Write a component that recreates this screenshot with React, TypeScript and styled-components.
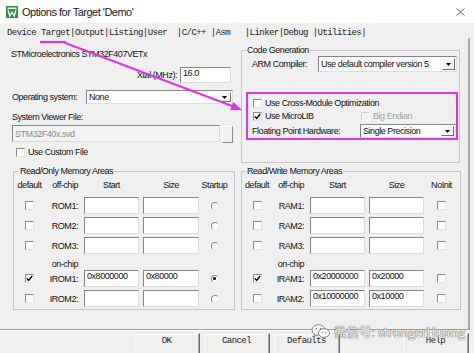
import React from "react";
import styled, { createGlobalStyle } from "styled-components";

const GlobalStyle = createGlobalStyle`
  html, body { margin: 0; padding: 0; background: #f0f0f0; }
  body {
    width: 474px; height: 353px; overflow: hidden;
    font-family: "Liberation Sans", Arial, sans-serif;
    font-size: 9px; letter-spacing: -0.45px; color: #111;
  }
  * { box-sizing: border-box; }
`;

const Window = styled.div`
  position: relative;
  width: 474px;
  height: 353px;
  overflow: hidden;
  background: #f0f0f0;
  display: flex;
  flex-direction: column;
`;

const TitleBar = styled.div`
  flex: none;
  height: 23px;
  background: #fff;
  display: flex;
  align-items: center;
  padding-left: 6px;
`;

const Title = styled.span`
  margin-left: 4px;
  font-size: 11px;
  letter-spacing: -0.5px;
  line-height: 14px;
  color: #1a1a1a;
`;

const CloseButton = styled.span`
  margin-left: auto;
  margin-right: 9px;
  display: flex;
`;

const TabBar = styled.div`
  flex: none;
  height: 15px;
  display: flex;
  padding: 4px 0 0 7px;
  font-family: "Liberation Mono", "Courier New", monospace;
  font-size: 9px;
  letter-spacing: -0.55px;
  line-height: 12px;
  white-space: pre;
  color: #222;
`;

const Tab = styled.span``;

const TabPage = styled.div`
  flex: none;
  width: 470px;
  height: 292px;
  border-right: 2px solid #a8a8a8;
  border-bottom: 1px solid #a0a0a0;
  box-shadow: 0 1px 0 #fff;
  display: flex;
  flex-direction: column;
`;

const TopSection = styled.div`
  display: flex;
  align-items: flex-start;
  padding-left: 11px;
  gap: 8px;
`;

const LeftColumn = styled.div`
  width: 222px;
  display: flex;
  flex-direction: column;
`;

const Row = styled.div<{ $mt: number; $h: number; $pl?: number }>`
  display: flex;
  align-items: center;
  margin-top: ${(p) => p.$mt}px;
  height: ${(p) => p.$h}px;
  padding-left: ${(p) => p.$pl ?? 0}px;
  line-height: 12px;
  white-space: nowrap;
`;

const Label = styled.span<{ $ml?: number; $mr?: number; $dim?: boolean }>`
  margin-left: ${(p) => p.$ml ?? 0}px;
  margin-right: ${(p) => p.$mr ?? 0}px;
  color: ${(p) => (p.$dim ? "#a3a3a3" : "#111")};
  white-space: nowrap;
`;

const EditBox = styled.div<{ $w: number; $h: number; $disabled?: boolean; $center?: boolean; $ml?: number }>`
  flex: none;
  width: ${(p) => p.$w}px;
  height: ${(p) => p.$h}px;
  margin-left: ${(p) => p.$ml ?? 0}px;
  background: ${(p) => (p.$disabled ? "#f3f3f3" : "#fff")};
  color: ${(p) => (p.$disabled ? "#8a8a8a" : "#111")};
  border: 1px solid;
  border-color: #858585 #dedede #dedede #858585;
  display: flex;
  align-items: ${(p) => (p.$center ? "center" : "flex-start")};
  padding: 0 2px;
  line-height: 10px;
  white-space: nowrap;
  overflow: hidden;
`;

const BrowseButton = styled.span`
  flex: none;
  width: 11px;
  height: 17px;
  margin-left: 2px;
  margin-top: 2px;
  background: #f0f0f0;
  border: 1px solid;
  border-color: #fff #8a8a8a #8a8a8a #fff;
`;

const Combo = styled.div<{ $w: number; $h: number; $ml?: string; $mr?: number }>`
  flex: none;
  width: ${(p) => p.$w}px;
  height: ${(p) => p.$h}px;
  margin-left: ${(p) => p.$ml ?? "0"};
  margin-right: ${(p) => p.$mr ?? 0}px;
  background: #fff;
  border: 1px solid;
  border-color: #858585 #dedede #dedede #858585;
  display: flex;
  align-items: center;
  padding-left: 2px;
  white-space: nowrap;
`;

const DropButton = styled.span`
  margin-left: auto;
  align-self: stretch;
  width: 13px;
  margin-top: 1px;
  margin-bottom: 1px;
  margin-right: 1px;
  background: #f4f4f4;
  border: 1px solid;
  border-color: #fff #6e6e6e #6e6e6e #fff;
  display: flex;
  align-items: center;
  justify-content: center;
`;

const Group = styled.fieldset<{ $w: number; $mt: number; $pb: number; $pl: number; $pr: number }>`
  margin: ${(p) => p.$mt}px 0 0 0;
  padding: 0 ${(p) => p.$pr}px ${(p) => p.$pb}px ${(p) => p.$pl}px;
  width: ${(p) => p.$w}px;
  min-width: 0;
  border: 1px solid #c6c6c6;
  flex: none;
`;

const Legend = styled.legend<{ $ml: number }>`
  margin-left: ${(p) => p.$ml}px;
  padding: 0 1px;
  line-height: 12px;
  font-size: 9px;
  color: #111;
`;

const Highlight = styled.div`
  margin-top: 20px;
  width: 212px;
  height: 48px;
  border: 2px solid #e233e2;
  padding: 3px 0 0 4px;
  display: flex;
  flex-direction: column;
`;

const HLRow = styled.div<{ $mt: number; $h: number }>`
  display: flex;
  align-items: center;
  margin-top: ${(p) => p.$mt}px;
  height: ${(p) => p.$h}px;
  white-space: nowrap;
`;

const HLCell = styled.div<{ $w?: number }>`
  display: flex;
  align-items: center;
  width: ${(p) => (p.$w ? `${p.$w}px` : "auto")};
  flex: none;
`;

const CheckSquare = styled.span<{ $disabled?: boolean; $ml?: number }>`
  flex: none;
  display: inline-flex;
  align-items: center;
  justify-content: center;
  width: 9px;
  height: 9px;
  margin-left: ${(p) => p.$ml ?? 0}px;
  background: ${(p) => (p.$disabled ? "#f5f5f5" : "#fff")};
  border: 1px solid;
  border-color: ${(p) =>
    p.$disabled ? "#d2d2d2 #f6f6f6 #f6f6f6 #d2d2d2" : "#8a8a8a #e4e4e4 #e4e4e4 #8a8a8a"};
`;

const RadioCircle = styled.span`
  flex: none;
  display: inline-flex;
  align-items: center;
  justify-content: center;
  width: 8px;
  height: 8px;
  border-radius: 50%;
  border: 1px solid;
  border-color: #8a8a8a #eeeeee #eeeeee #8a8a8a;
  background: #fff;
`;

const RadioDot = styled.span`
  width: 3px;
  height: 3px;
  border-radius: 50%;
  background: #000;
`;

const MemorySection = styled.div`
  display: flex;
  margin-top: 2px;
  padding-left: 13px;
  gap: 6px;
`;

const MemGrid = styled.div`
  display: flex;
  flex-direction: column;
  padding-left: 1px;
`;

const MemRow = styled.div<{ $cols: string; $h: number; $mt: number }>`
  display: grid;
  grid-template-columns: ${(p) => p.$cols};
  align-items: center;
  height: ${(p) => p.$h}px;
  margin-top: ${(p) => p.$mt}px;
  line-height: 12px;
  white-space: nowrap;
`;

const CenterCell = styled.div<{ $w?: number }>`
  display: flex;
  justify-content: center;
  align-items: center;
  width: ${(p) => (p.$w ? `${p.$w}px` : "auto")};
`;

const RightCell = styled.div`
  text-align: right;
  padding-right: 6px;
`;

const ButtonRow = styled.div`
  flex: none;
  display: flex;
  margin-top: 3px;
  padding: 0 5px 0 133px;
  gap: 3px;
`;

const PushButton = styled.div<{ $push?: boolean }>`
  width: 67px;
  height: 22px;
  margin-left: ${(p) => (p.$push ? "auto" : "0")};
  background: #f0f0f0;
  border: 1px solid;
  border-color: #ececec #6a6a6a #6a6a6a #ececec;
  box-shadow: inset -1px -1px 0 #a8a8a8, inset 1px 1px 0 #fff;
  display: flex;
  justify-content: center;
  padding-top: 1px;
  font-family: "Liberation Mono", "Courier New", monospace;
  font-size: 9px;
  letter-spacing: -0.55px;
  line-height: 12px;
  color: #222;
`;

const Overlay = styled.svg`
  position: absolute;
  left: 0;
  top: 0;
  pointer-events: none;
`;

const Watermark = styled.div`
  position: absolute;
  left: 311px;
  top: 323px;
  display: flex;
  align-items: center;
  gap: 3px;
  font-family: "Noto Sans CJK SC", "Noto Sans", sans-serif;
  font-size: 12.5px;
  letter-spacing: 0;
  line-height: 17px;
  color: rgba(255, 255, 255, 0.92);
  text-shadow: 0 0 1px #6d6d6d, 0 0 1px #6d6d6d, 0 0 1px #8d8d8d;
  white-space: nowrap;
`;

const Check = ({ checked, disabled, ml }: { checked?: boolean; disabled?: boolean; ml?: number }) => (
  <CheckSquare $disabled={disabled} $ml={ml}>
    {checked && (
      <svg width="7" height="7" viewBox="0 0 7 7">
        <polyline points="0.8,3.4 2.6,5.4 6.2,1" fill="none" stroke="#000" strokeWidth="1.4" />
      </svg>
    )}
  </CheckSquare>
);

const Radio = ({ on }: { on?: boolean }) => <RadioCircle>{on && <RadioDot />}</RadioCircle>;

const Arrow = () => (
  <svg width="5" height="3" viewBox="0 0 5 3">
    <polygon points="0,0 5,0 2.5,3" fill="#000" />
  </svg>
);

const AppIcon = () => (
  <svg width="12" height="12" viewBox="0 0 12 12">
    <rect x="0" y="0" width="12" height="12" fill="#2f8c45" />
    <rect x="1.5" y="1.5" width="9" height="1.6" fill="#e8f5e0" />
    <path d="M2 4 L3.8 10 L6 6 L8.2 10 L10 4" fill="none" stroke="#fff" strokeWidth="1.3" />
  </svg>
);

const CloseIcon = () => (
  <svg width="9" height="8" viewBox="0 0 9 8">
    <path d="M0.5 0.5 L8.5 7.5 M8.5 0.5 L0.5 7.5" stroke="#555" strokeWidth="0.9" />
  </svg>
);

const WeChatIcon = () => (
  <svg width="20" height="17" viewBox="0 0 20 17">
    <ellipse cx="7.5" cy="7" rx="6.5" ry="5.3" fill="rgba(255,255,255,0.85)" stroke="#7a7a7a" strokeWidth="0.9" />
    <path d="M3.5 11 L2.6 13.6 L6 12" fill="rgba(255,255,255,0.85)" stroke="#7a7a7a" strokeWidth="0.9" />
    <ellipse cx="13" cy="10" rx="5.5" ry="4.4" fill="rgba(255,255,255,0.9)" stroke="#7a7a7a" strokeWidth="0.9" />
    <circle cx="5.3" cy="5.6" r="0.8" fill="#7a7a7a" />
    <circle cx="9.5" cy="5.6" r="0.8" fill="#7a7a7a" />
    <circle cx="11.4" cy="9.4" r="0.65" fill="#7a7a7a" />
    <circle cx="14.8" cy="9.4" r="0.65" fill="#7a7a7a" />
  </svg>
);

const tabs = ["Device ", "Target", "|Output", "|Listing", "|User  ", "|C/C++ ", "|Asm   ", "|Linker", "|Debug ", "|Utilities|"];

type MemItem = { name: string; def?: boolean; start?: string; size?: string; flag?: boolean };

const romOff: MemItem[] = [{ name: "ROM1:" }, { name: "ROM2:" }, { name: "ROM3:" }];
const romOn: MemItem[] = [
  { name: "IROM1:", def: true, start: "0x8000000", size: "0x80000", flag: true },
  { name: "IROM2:" },
];
const ramOff: MemItem[] = [{ name: "RAM1:" }, { name: "RAM2:" }, { name: "RAM3:" }];
const ramOn: MemItem[] = [
  { name: "IRAM1:", def: true, start: "0x20000000", size: "0x20000" },
  { name: "IRAM2:", start: "0x10000000", size: "0x10000" },
];

type MemAreaProps = {
  legend: string;
  legendMl: number;
  width: number;
  cols: string;
  startW: number;
  sizeW: number;
  lastHeader: string;
  offChip: MemItem[];
  onChip: MemItem[];
  radio: boolean;
};

const MemArea = ({ legend, legendMl, width, cols, startW, sizeW, lastHeader, offChip, onChip, radio }: MemAreaProps) => {
  const renderRow = (m: MemItem, mt: number) => (
    <MemRow key={m.name} $cols={cols} $h={17} $mt={mt}>
      <CenterCell>
        <Check checked={m.def} />
      </CenterCell>
      <RightCell>{m.name}</RightCell>
      <EditBox $w={startW} $h={17}>{m.start}</EditBox>
      <EditBox $w={sizeW} $h={17}>{m.size}</EditBox>
      <CenterCell>{radio ? <Radio on={m.flag} /> : <Check checked={m.flag} />}</CenterCell>
    </MemRow>
  );
  return (
    <Group $w={width} $mt={0} $pb={2} $pl={0} $pr={0}>
      <Legend $ml={legendMl}>{legend}</Legend>
      <MemGrid>
        <MemRow $cols={cols} $h={14} $mt={1}>
          <CenterCell>default</CenterCell>
          <RightCell>off-chip</RightCell>
          <CenterCell $w={startW}>Start</CenterCell>
          <CenterCell $w={sizeW}>Size</CenterCell>
          <CenterCell>{lastHeader}</CenterCell>
        </MemRow>
        {offChip.map((m, i) => renderRow(m, i === 0 ? 5 : 3))}
        <MemRow $cols={cols} $h={13} $mt={3}>
          <span />
          <RightCell>on-chip</RightCell>
        </MemRow>
        {onChip.map((m, i) => renderRow(m, i === 0 ? 0 : 3))}
      </MemGrid>
    </Group>
  );
};

export default function App() {
  return (
    <Window>
      <GlobalStyle />
      <TitleBar>
        <AppIcon />
        <Title>Options for Target 'Demo'</Title>
        <CloseButton>
          <CloseIcon />
        </CloseButton>
      </TitleBar>

      <TabBar>
        {tabs.map((t) => (
          <Tab key={t}>{t}</Tab>
        ))}
      </TabBar>

      <TabPage>
        <TopSection>
          <LeftColumn>
            <Row $mt={10} $h={12}>STMicroelectronics STM32F407VETx</Row>
            <Row $mt={7} $h={16}>
              <Label $ml={126} $mr={3}>Xtal (MHz):</Label>
              <EditBox $w={51} $h={16} $ml={0}>16.0</EditBox>
            </Row>
            <Row $mt={7} $h={14} $pl={1}>
              <Label>Operating system:</Label>
              <Combo $w={147} $h={14} $ml="auto">
                None
                <DropButton>
                  <Arrow />
                </DropButton>
              </Combo>
            </Row>
            <Row $mt={7} $h={12} $pl={1}>
              System Viewer File:
            </Row>
            <Row $mt={1} $h={19} $pl={1}>
              <EditBox $w={208} $h={17} $disabled $center>
                STM32F40x.svd
              </EditBox>
              <BrowseButton />
            </Row>
            <Row $mt={3} $h={12} $pl={5}>
              <Check />
              <Label $ml={3}>Use Custom File</Label>
            </Row>
          </LeftColumn>

          <Group $w={219} $mt={6} $pb={22} $pl={4} $pr={1}>
            <Legend $ml={0}>Code Generation</Legend>
            <Row $mt={0} $h={16} $pl={6}>
              <Label>ARM Compiler:</Label>
              <Combo $w={139} $h={16} $ml="auto" $mr={1}>
                Use default compiler version 5
                <DropButton>
                  <Arrow />
                </DropButton>
              </Combo>
            </Row>
            <Highlight>
              <HLRow $mt={0} $h={12}>
                <Check ml={1} />
                <Label $ml={3}>Use Cross-Module Optimization</Label>
              </HLRow>
              <HLRow $mt={1} $h={12}>
                <HLCell $w={108}>
                  <Check ml={1} checked />
                  <Label $ml={3}>Use MicroLIB</Label>
                </HLCell>
                <HLCell>
                  <Check ml={1} disabled />
                  <Label $ml={3} $dim>
                    Big Endian
                  </Label>
                </HLCell>
              </HLRow>
              <HLRow $mt={2} $h={14}>
                <HLCell $w={108}>
                  <Label>Floating Point Hardware:</Label>
                </HLCell>
                <Combo $w={96} $h={14}>
                  Single Precision
                  <DropButton>
                    <Arrow />
                  </DropButton>
                </Combo>
              </HLRow>
            </Highlight>
          </Group>
        </TopSection>

        <MemorySection>
          <MemArea
            legend="Read/Only Memory Areas"
            legendMl={5}
            width={222}
            cols="29px 40px 59px 56px 31px"
            startW={55}
            sizeW={56}
            lastHeader="Startup"
            offChip={romOff}
            onChip={romOn}
            radio
          />
          <MemArea
            legend="Read/Write Memory Areas"
            legendMl={4}
            width={220}
            cols="28px 39px 59px 55px 35px"
            startW={55}
            sizeW={55}
            lastHeader="NoInit"
            offChip={ramOff}
            onChip={ramOn}
            radio={false}
          />
        </MemorySection>
      </TabPage>

      <ButtonRow>
        <PushButton>OK</PushButton>
        <PushButton>Cancel</PushButton>
        <PushButton>Defaults</PushButton>
        <PushButton $push>Help</PushButton>
      </ButtonRow>

      <Overlay width="474" height="353" viewBox="0 0 474 353">
        <line x1="40" y1="42" x2="66" y2="42" stroke="#e233e2" strokeWidth="2.2" />
        <line x1="64" y1="42.5" x2="234" y2="106.8" stroke="#e233e2" strokeWidth="2" />
        <polygon points="242,110 230.1,110.3 233.3,101.9" fill="#e233e2" />
      </Overlay>

      <Watermark>
        <WeChatIcon />
        <span>微信号: strongerHuang</span>
      </Watermark>
    </Window>
  );
}
